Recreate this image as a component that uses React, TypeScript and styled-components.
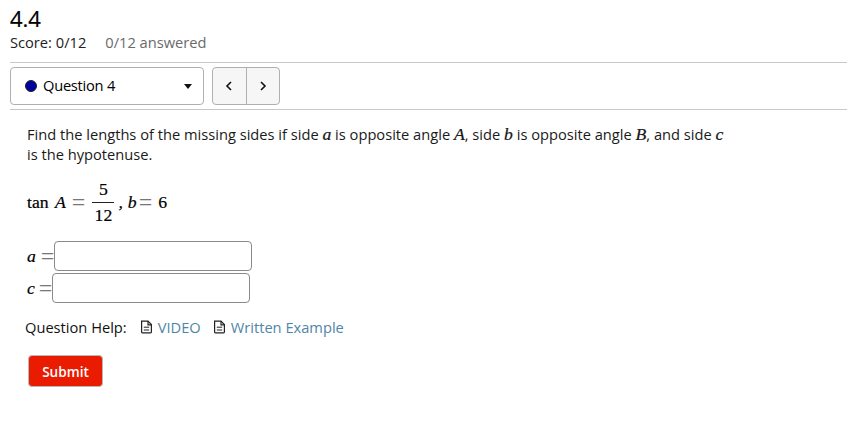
import React from "react";
import styled, { createGlobalStyle } from "styled-components";

const Global = createGlobalStyle`
  html, body { margin: 0; padding: 0; background: #fff; }
  body { font-family: "Open Sans", sans-serif; color: #000; }
`;
const Page = styled.div`
  padding: 7px 0 0 10px;
  width: 847px;
  box-sizing: border-box;
`;
const Title = styled.h1`
  margin: 0;
  font-size: 22px;
  font-weight: 400;
  line-height: 22px;
  height: 24px;
  -webkit-text-stroke: 0.2px #000;
`;
const ScoreRow = styled.div`
  display: flex;
  gap: 19px;
  font-size: 14.67px;
  line-height: 19px;
  margin-top: 2px;
  color: #222;
`;
const Answered = styled.span`
  color: #6a6a6a;
`;
const Rule = styled.hr`
  margin: 0;
  border: 0;
  border-top: 1px solid #c8c8c8;
  height: 0;
`;
const TopRule = styled(Rule)`
  margin-top: 10px;
`;
const NavRow = styled.div`
  display: flex;
  gap: 8px;
  margin: 4px 0 4px;
`;
const Select = styled.div`
  width: 194px;
  height: 38px;
  box-sizing: border-box;
  border: 1px solid #b0b0b0;
  border-radius: 4px;
  display: flex;
  align-items: center;
  padding: 0 11px 2px 14px;
  font-size: 14.67px;
  letter-spacing: -0.25px;
`;
const Dot = styled.span`
  width: 12px;
  height: 12px;
  border-radius: 50%;
  background: #00009e;
  border: 1px solid #222;
  box-sizing: border-box;
  margin-right: 6px;
  margin-top: 2px;
`;
const Caret = styled.span`
  margin-left: auto;
  margin-top: 2px;
  width: 0;
  height: 0;
  border-left: 4px solid transparent;
  border-right: 4px solid transparent;
  border-top: 5px solid #111;
`;
const Pager = styled.div`
  display: flex;
  width: 68px;
  height: 38px;
  box-sizing: border-box;
  border: 1px solid #b0b0b0;
  border-radius: 4px;
  background: #f6f6f6;
`;
const PageBtn = styled.button<{ $divider?: boolean }>`
  flex: 1;
  padding: 0;
  border: 0;
  background: transparent;
  display: flex;
  align-items: center;
  justify-content: center;
  border-left: ${(p) => (p.$divider ? "1px solid #b0b0b0" : "0")};
`;
const Body = styled.div`
  padding: 14px 0 0 17px;
`;
const Prompt = styled.p`
  margin: 0;
  width: 704px;
  font-size: 14.67px;
  line-height: 20px;
  color: #1a1a1a;
`;
const M = styled.span`
  font-family: "Liberation Serif", serif;
  font-style: italic;
  font-size: 17.7px;
  line-height: 1;
  -webkit-text-stroke: 0.2px #000;
`;
const Formula = styled.div`
  display: flex;
  align-items: center;
  margin-top: 14px;
  height: 48px;
  font-family: "Liberation Serif", serif;
  font-size: 17.7px;
  -webkit-text-stroke: 0.2px #000;
`;
const Fn = styled.span`
  margin-right: 2px;
`;
const Eq = styled.span<{ $l: number; $r: number }>`
  color: #777;
  font-size: 24px;
  line-height: 1;
  margin: 0 ${(p) => p.$r}px 0 ${(p) => p.$l}px;
  -webkit-text-stroke: 0;
`;
const Frac = styled.span`
  display: flex;
  flex-direction: column;
  align-items: center;
  width: 22px;
  margin: 0 0 0 3px;
  line-height: 20px;
`;
const Num = styled.span`
  width: 100%;
  text-align: center;
  border-bottom: 1px solid #222;
  padding-bottom: 3px;
`;
const Den = styled.span`
  padding-top: 2px;
`;
const Comma = styled.span`
  margin: 0 5px 0 4px;
  font-style: italic;
`;
const Field = styled.div<{ $gap: number }>`
  display: flex;
  align-items: center;
  height: 30px;
  margin-top: ${(p) => p.$gap}px;
  font-family: "Liberation Serif", serif;
  font-size: 17.7px;
  -webkit-text-stroke: 0.2px #000;
`;
const EqTight = styled.span<{ $l: number }>`
  color: #777;
  font-size: 24px;
  line-height: 1;
  margin-left: ${(p) => p.$l}px;
  -webkit-text-stroke: 0;
`;
const Input = styled.input`
  width: 198px;
  height: 100%;
  box-sizing: border-box;
  border: 1px solid #8a8a8a;
  border-radius: 4px;
  background: #fff;
  padding: 0;
`;
const Help = styled.div`
  display: flex;
  align-items: center;
  margin-top: 14px;
  height: 20px;
  margin-left: -2px;
  font-size: 14.67px;
`;
const HelpLabel = styled.span`
  margin-right: 13px;
  color: #111;
`;
const HelpLink = styled.a`
  display: flex;
  align-items: center;
  gap: 5px;
  color: #4f86a8;
  margin-right: 12px;
`;
const Submit = styled.button`
  display: block;
  margin: 18px 0 0 1px;
  width: 75px;
  height: 32px;
  box-sizing: border-box;
  border: 1px solid #b8b8b8;
  border-radius: 4px;
  background: #e91b00;
  color: #fff;
  font-family: "Open Sans", sans-serif;
  font-size: 13.6px;
  font-weight: 600;
  padding: 0;
`;

const Chevron = ({ left }: { left?: boolean }) => (
  <svg width="8" height="12" viewBox="0 0 8 12" fill="none" stroke="#111" strokeWidth="1.6">
    <path d={left ? "M6 2 L2 6 L6 10" : "M2 2 L6 6 L2 10"} />
  </svg>
);
const DocIcon = () => (
  <svg width="13" height="14" viewBox="0 0 13 14" fill="none" stroke="#222" strokeWidth="1.2">
    <path d="M1.6 1.2 H8 L11.4 4.6 V12 Q11.4 12.8 10.6 12.8 H2.4 Q1.6 12.8 1.6 12 Z" />
    <path d="M8 1.2 V4.8 H11.4" />
    <path d="M3.8 7.2 H9.2 M3.8 10 H9.2" strokeWidth="1" />
  </svg>
);

export default function App() {
  return (
    <Page>
      <Global />
      <Title>4.4</Title>
      <ScoreRow>
        <span>Score: 0/12</span>
        <Answered>0/12 answered</Answered>
      </ScoreRow>
      <TopRule />
      <NavRow>
        <Select>
          <Dot />
          Question 4
          <Caret />
        </Select>
        <Pager>
          <PageBtn aria-label="Previous"><Chevron left /></PageBtn>
          <PageBtn $divider aria-label="Next"><Chevron /></PageBtn>
        </Pager>
      </NavRow>
      <Rule />
      <Body>
        <Prompt>
          Find the lengths of the missing sides if side <M>a</M> is opposite angle <M>A</M>, side <M>b</M> is opposite angle <M>B</M>, and side <M>c</M> is the hypotenuse.
        </Prompt>
        <Formula>
          <Fn>tan</Fn>&nbsp;<i>A</i>
          <Eq $l={6} $r={4}>=</Eq>
          <Frac>
            <Num>5</Num>
            <Den>12</Den>
          </Frac>
          <Comma>,</Comma>
          <i>b</i>
          <Eq $l={2} $r={6}>=</Eq>
          6
        </Formula>
        <Field $gap={15}>
          <i>a</i>
          <EqTight $l={5}>=</EqTight>
          <Input />
        </Field>
        <Field $gap={2}>
          <i>c</i>
          <EqTight $l={4}>=</EqTight>
          <Input />
        </Field>
        <Help>
          <HelpLabel>Question Help:</HelpLabel>
          <HelpLink><DocIcon />VIDEO</HelpLink>
          <HelpLink><DocIcon />Written Example</HelpLink>
        </Help>
        <Submit>Submit</Submit>
      </Body>
    </Page>
  );
}
